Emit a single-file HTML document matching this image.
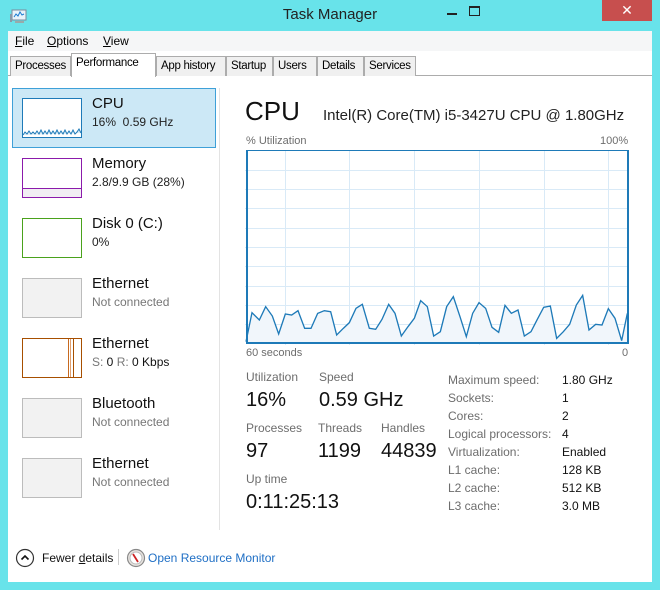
<!DOCTYPE html>
<html><head><meta charset="utf-8"><style>
*{margin:0;padding:0;box-sizing:border-box}
body{width:660px;height:590px;background:#68e3ea;font-family:"Liberation Sans",sans-serif;position:relative;overflow:hidden;font-size:12px;color:#000}
.a{position:absolute;white-space:nowrap}
.tab{position:absolute;top:56px;height:20px;border:1px solid #acacac;border-bottom:none;background:#f0f0f0;font-size:11.5px;padding:3px 0 0 4px;letter-spacing:-0.3px}
.thumb{position:absolute;left:22px;width:60px;height:40px;border:1px solid #bcbcbc;background:#f2f2f2}
.t1{font-size:15px;color:#111}
.t2{font-size:12px;color:#777}
.lbl{font-size:12px;color:#6d6d6d}
.big{font-size:20px;color:#111}
</style></head><body>
<!-- title bar -->
<svg class="a" style="left:8px;top:8px" width="20" height="16" viewBox="0 0 20 16"><rect x="4" y="2" width="14" height="10" fill="#e8f3fa" stroke="#7a8a99"/><polyline points="6,9 8,6 10,8 12,4 14,7 16,6" fill="none" stroke="#1a7ad0"/><rect x="2" y="6" width="2" height="8" fill="#8a9aa8"/><rect x="7" y="13" width="9" height="2" fill="#9aa"/></svg>
<div class="a" style="left:0;width:660px;top:6px;text-align:center;font-size:15px;color:#222">Task Manager</div>
<div class="a" style="left:447px;top:13px;width:10px;height:2px;background:#222"></div>
<div class="a" style="left:469px;top:6px;width:11px;height:10px;border:1px solid #222;border-top-width:2px"></div>
<div class="a" style="left:602px;top:0;width:50px;height:21px;background:#c74f4e;color:#fff;text-align:center;font-size:14px;line-height:21px">✕</div>
<!-- client -->
<div class="a" style="left:8px;top:31px;width:644px;height:551px;background:#fff"></div>
<div class="a" style="left:8px;top:31px;width:644px;height:20px;background:#f5f6f7"></div>
<div class="a" style="left:15px;top:34px;font-size:12px"><u>F</u>ile</div>
<div class="a" style="left:47px;top:34px;font-size:12px"><u>O</u>ptions</div>
<div class="a" style="left:103px;top:34px;font-size:12px"><u>V</u>iew</div>
<div class="a" style="left:8px;top:75px;width:644px;height:1px;background:#acacac"></div>
<div class="tab" style="left:10px;width:61px">Processes</div>
<div class="tab" style="left:71px;top:53px;width:85px;height:24px;background:#fff;padding-top:3px">Performance</div>
<div class="tab" style="left:156px;width:70px">App history</div>
<div class="tab" style="left:226px;width:47px">Startup</div>
<div class="tab" style="left:273px;width:44px">Users</div>
<div class="tab" style="left:317px;width:47px">Details</div>
<div class="tab" style="left:364px;width:52px">Services</div>
<!-- sidebar -->
<div class="a" style="left:219px;top:88px;width:1px;height:442px;background:#e3e3e3"></div>
<div class="a" style="left:12px;top:88px;width:204px;height:60px;background:#cce8f6;border:1px solid #3ea0d8"></div>
<div class="thumb" style="top:98px;background:#fff;border-color:#1e7ab8"></div>
<svg class="a" style="left:23px;top:126px" width="58" height="11" viewBox="0 0 58 11"><polyline points="0,9 2,6 4,8 6,5 8,8 10,6 12,8 14,5 16,8 18,4 20,8 22,5 24,8 26,4 28,8 30,5 32,8 34,4 36,8 38,5 40,8 42,4 44,8 46,5 48,8 50,4 52,8 54,6 56,3 58,7" fill="#d9ecf7" stroke="#1e7ab8" stroke-width="1"/></svg>
<div class="a t1" style="left:92px;top:95px">CPU</div>
<div class="a" style="left:92px;top:115px;font-size:12px;color:#222">16%&nbsp; 0.59 GHz</div>

<div class="thumb" style="top:158px;background:#fff;border-color:#8b1aab"></div>
<div class="a" style="left:23px;top:188px;width:58px;height:9px;background:#f1eef3;border-top:1px solid #8b1aab"></div>
<div class="a t1" style="left:92px;top:155px">Memory</div>
<div class="a" style="left:92px;top:175px;font-size:12px;color:#222">2.8/9.9 GB (28%)</div>

<div class="thumb" style="top:218px;background:#fff;border-color:#4aa21c"></div>
<div class="a t1" style="left:92px;top:215px">Disk 0 (C:)</div>
<div class="a" style="left:92px;top:235px;font-size:12px;color:#222">0%</div>

<div class="thumb" style="top:278px"></div>
<div class="a t1" style="left:92px;top:275px">Ethernet</div>
<div class="a t2" style="left:92px;top:295px">Not connected</div>

<div class="thumb" style="top:338px;background:#fff;border-color:#a74f00"></div>
<div class="a" style="left:68px;top:339px;width:1px;height:38px;background:#c76a20"></div>
<div class="a" style="left:70px;top:339px;width:1px;height:38px;background:#e0a070"></div>
<div class="a" style="left:73px;top:339px;width:1px;height:38px;background:#a74f00"></div>
<div class="a t1" style="left:92px;top:335px">Ethernet</div>
<div class="a" style="left:92px;top:355px;font-size:12px;color:#777">S: <span style="color:#111">0</span> R: <span style="color:#111">0 Kbps</span></div>

<div class="thumb" style="top:398px"></div>
<div class="a t1" style="left:92px;top:395px">Bluetooth</div>
<div class="a t2" style="left:92px;top:415px">Not connected</div>

<div class="thumb" style="top:458px"></div>
<div class="a t1" style="left:92px;top:455px">Ethernet</div>
<div class="a t2" style="left:92px;top:475px">Not connected</div>

<!-- main -->
<div class="a" style="left:245px;top:96px;font-size:26px;color:#111">CPU</div>
<div class="a" style="left:323px;top:107px;font-size:15px;color:#222">Intel(R) Core(TM) i5-3427U CPU @ 1.80GHz</div>
<div class="a lbl" style="left:246px;top:135px;font-size:11px">% Utilization</div>
<div class="a lbl" style="left:600px;top:135px;font-size:11px">100%</div>
<svg class="a" style="left:245px;top:150px" width="384" height="195" viewBox="0 0 384 195">
<g stroke="#d9eaf7" stroke-width="1">
<line x1="40.5" y1="0" x2="40.5" y2="195"/><line x1="104.5" y1="0" x2="104.5" y2="195"/><line x1="169.5" y1="0" x2="169.5" y2="195"/><line x1="234.5" y1="0" x2="234.5" y2="195"/><line x1="299.5" y1="0" x2="299.5" y2="195"/><line x1="363.5" y1="0" x2="363.5" y2="195"/>
<line x1="0" y1="20.5" x2="384" y2="20.5"/><line x1="0" y1="39.5" x2="384" y2="39.5"/><line x1="0" y1="58.5" x2="384" y2="58.5"/><line x1="0" y1="78.5" x2="384" y2="78.5"/><line x1="0" y1="97.5" x2="384" y2="97.5"/><line x1="0" y1="116.5" x2="384" y2="116.5"/><line x1="0" y1="136.5" x2="384" y2="136.5"/><line x1="0" y1="155.5" x2="384" y2="155.5"/><line x1="0" y1="174.5" x2="384" y2="174.5"/>
</g>
</svg>
<svg class="a" style="left:230px;top:280px" width="420" height="70" viewBox="0 0 1260 210">
<polygon fill="#f1f6fb" stroke="none" points="48,188 48,185 66,98 88,120 107,80 127,108 146,162 166,102 185,105 204,92 224,145 243,145 263,100 283,92 302,95 320,165 340,145 358,128 378,85 397,73 418,145 437,148 456,118 476,73 495,100 514,168 534,140 553,115 572,62 592,80 611,168 631,155 650,80 670,50 690,110 709,170 728,100 747,68 767,85 786,142 806,157 825,76 844,100 864,90 883,168 903,155 922,118 941,82 961,78 980,175 1000,155 1019,133 1039,75 1058,46 1077,150 1097,133 1116,135 1135,86 1155,115 1175,182 1192,100 1192,188"/>
<polyline fill="none" stroke="#1e7ab8" stroke-width="4" points="48,185 66,98 88,120 107,80 127,108 146,162 166,102 185,105 204,92 224,145 243,145 263,100 283,92 302,95 320,165 340,145 358,128 378,85 397,73 418,145 437,148 456,118 476,73 495,100 514,168 534,140 553,115 572,62 592,80 611,168 631,155 650,80 670,50 690,110 709,170 728,100 747,68 767,85 786,142 806,157 825,76 844,100 864,90 883,168 903,155 922,118 941,82 961,78 980,175 1000,155 1019,133 1039,75 1058,46 1077,150 1097,133 1116,135 1135,86 1155,115 1175,182 1192,100"/>
</svg>
<div class="a" style="left:246px;top:150px;width:383px;height:194px;border:2px solid #1e7ab8;border-width:1px 2px 2px 2px"></div>
<div class="a lbl" style="left:246px;top:347px;font-size:11px">60 seconds</div>
<div class="a lbl" style="left:622px;top:347px;font-size:11px">0</div>

<div class="a lbl" style="left:246px;top:370px">Utilization</div>
<div class="a lbl" style="left:319px;top:370px">Speed</div>
<div class="a big" style="left:246px;top:389px">16%</div>
<div class="a big" style="left:319px;top:389px">0.59 GHz</div>
<div class="a lbl" style="left:246px;top:421px">Processes</div>
<div class="a lbl" style="left:318px;top:421px">Threads</div>
<div class="a lbl" style="left:381px;top:421px">Handles</div>
<div class="a big" style="left:246px;top:440px">97</div>
<div class="a big" style="left:318px;top:440px">1199</div>
<div class="a big" style="left:381px;top:440px">44839</div>
<div class="a lbl" style="left:246px;top:472px">Up time</div>
<div class="a big" style="left:246px;top:491px">0:11:25:13</div>

<div class="a lbl" style="left:448px;top:371px;line-height:18px">Maximum speed:<br>Sockets:<br>Cores:<br>Logical processors:<br>Virtualization:<br>L1 cache:<br>L2 cache:<br>L3 cache:</div>
<div class="a" style="left:562px;top:371px;line-height:18px;color:#111">1.80 GHz<br>1<br>2<br>4<br>Enabled<br>128 KB<br>512 KB<br>3.0 MB</div>

<!-- footer -->
<svg class="a" style="left:15px;top:548px" width="20" height="20" viewBox="0 0 20 20"><circle cx="10" cy="10" r="8.5" fill="#fff" stroke="#333" stroke-width="1.2"/><polyline points="6.5,11.5 10,8 13.5,11.5" fill="none" stroke="#111" stroke-width="1.6"/></svg>
<div class="a" style="left:42px;top:551px;font-size:12px;color:#111">Fewer <u>d</u>etails</div>
<div class="a" style="left:118px;top:549px;width:1px;height:16px;background:#ccc"></div>
<svg class="a" style="left:126px;top:548px" width="20" height="20" viewBox="0 0 20 20"><circle cx="10" cy="10" r="8.5" fill="#e8e4e0" stroke="#888" stroke-width="1.2"/><circle cx="10" cy="10" r="6" fill="#fff" stroke="#bbb"/><line x1="7" y1="6" x2="12" y2="14" stroke="#c22" stroke-width="1.8"/></svg>
<div class="a" style="left:148px;top:551px;font-size:12px;color:#1f6fc5">Open Resource Monitor</div>
</body></html>
